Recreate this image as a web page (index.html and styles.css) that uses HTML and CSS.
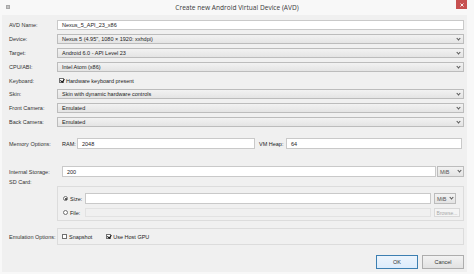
FILE: index.html
```html
<!DOCTYPE html>
<html lang="en">
<head>
    <meta charset="UTF-8">
    <title>Create new Android Virtual Device (AVD)</title>
    <link rel="stylesheet" href="styles.css">
</head>
<body>
    <div class="window">
        <div class="titlebar">
            <span class="app-icon"></span>
            <span class="title">Create new Android Virtual Device (AVD)</span>
            <span class="close">
                <svg width="4" height="4" viewBox="0 0 4 4"><path d="M0.5 0.5 L3.5 3.5 M3.5 0.5 L0.5 3.5" stroke="#fff" stroke-width="0.9"/></svg>
            </span>
        </div>

        <div class="client">
            <div class="form">
                <div class="row">
                    <div class="label">AVD Name:</div>
                    <div class="field">Nexus_5_API_23_x86</div>
                </div>
                <div class="row">
                    <div class="label">Device:</div>
                    <div class="select"><span>Nexus 5 (4.95", 1080 × 1920: xxhdpi)</span><span class="chev"></span></div>
                </div>
                <div class="row">
                    <div class="label">Target:</div>
                    <div class="select"><span>Android 6.0 - API Level 23</span><span class="chev"></span></div>
                </div>
                <div class="row">
                    <div class="label">CPU/ABI:</div>
                    <div class="select"><span>Intel Atom (x86)</span><span class="chev"></span></div>
                </div>
                <div class="row short">
                    <div class="label">Keyboard:</div>
                    <div class="check-item first"><span class="checkbox checked"></span>Hardware keyboard present</div>
                </div>
                <div class="row">
                    <div class="label">Skin:</div>
                    <div class="select"><span>Skin with dynamic hardware controls</span><span class="chev"></span></div>
                </div>
                <div class="row">
                    <div class="label">Front Camera:</div>
                    <div class="select"><span>Emulated</span><span class="chev"></span></div>
                </div>
                <div class="row">
                    <div class="label">Back Camera:</div>
                    <div class="select"><span>Emulated</span><span class="chev"></span></div>
                </div>

                <div class="row tall memory">
                    <div class="label">Memory Options:</div>
                    <div class="composite">
                        <span class="inline-label ram">RAM:</span>
                        <div class="field ram-field">2048</div>
                        <span class="inline-label heap">VM Heap:</span>
                        <div class="field">64</div>
                    </div>
                </div>

                <div class="row tall storage">
                    <div class="label">Internal Storage:</div>
                    <div class="composite">
                        <div class="field">200</div>
                        <div class="select unit wide"><span>MiB</span><span class="chev"></span></div>
                    </div>
                </div>

                <div class="row sd">
                    <div class="label">SD Card:</div>
                    <div class="group sd-group">
                        <div class="sd-line">
                            <div class="option"><span class="radio selected"></span>Size:</div>
                            <div class="field">&nbsp;</div>
                            <div class="side"><div class="select unit"><span>MiB</span><span class="chev"></span></div></div>
                        </div>
                        <div class="sd-line file">
                            <div class="option"><span class="radio"></span>File:</div>
                            <div class="field disabled">&nbsp;</div>
                            <div class="side"><div class="button small disabled">Browse...</div></div>
                        </div>
                    </div>
                </div>

                <div class="row emulation">
                    <div class="label">Emulation Options:</div>
                    <div class="group emu-group">
                        <div class="check-item"><span class="checkbox"></span>Snapshot</div>
                        <div class="check-item gpu"><span class="checkbox checked"></span>Use Host GPU</div>
                    </div>
                </div>
            </div>

            <div class="actions">
                <div class="button default">OK</div>
                <div class="button">Cancel</div>
            </div>
        </div>
    </div>
</body>
</html>
```

FILE: styles.css
```css
* {
    box-sizing: border-box;
}
body {
    margin: 0;
    background-color: #ffffff;
    font-family: "Liberation Sans", Arial, sans-serif;
    font-size: 5.5px;
    color: #222;
}
.window {
    width: 474px;
    height: 274px;
    background-color: #f8f8f8;
    display: flex;
    flex-direction: column;
}

/* title bar */
.titlebar {
    height: 15px;
    display: grid;
    grid-template-columns: 1fr auto 1fr;
    align-items: start;
}
.app-icon {
    width: 4px;
    height: 4px;
    margin: 5px 0 0 6px;
    background-color: #c4c4c4;
    border: 1px solid #a8a8a8;
}
.title {
    font-family: "Open Sans", "Liberation Sans", sans-serif;
    font-size: 6.6px;
    color: #3a3a3a;
    margin-top: 3px;
}
.close {
    justify-self: end;
    width: 11px;
    height: 9px;
    margin-right: 7px;
    background-color: #c75050;
    display: flex;
    justify-content: center;
    align-items: center;
}
.close svg {
    display: block;
}

/* client area */
.client {
    flex: 1;
    margin: 0 7px 2px 2px;
    background-color: #f0f0f0;
    padding: 5px 3px 0 7px;
}
.row {
    display: flex;
    align-items: center;
    height: 10px;
    margin-top: 4px;
}
.row:first-child {
    margin-top: 0;
}
.row.short {
    height: 9px;
}
.row.tall {
    height: 11px;
}
.row.memory {
    margin-top: 11px;
}
.row.storage {
    margin-top: 17px;
}
.label {
    width: 48px;
    flex: none;
    color: #333;
}

.field {
    flex: 1;
    height: 100%;
    background-color: #fff;
    border: 1px solid #c9c9c9;
    padding-left: 4px;
    display: flex;
    align-items: center;
    white-space: nowrap;
}
.field.disabled {
    background-color: #f0f0f0;
    border-color: #e2e2e2;
}
.select {
    flex: 1;
    height: 100%;
    background: linear-gradient(#f2f2f2, #e4e4e4);
    border: 1px solid #bcbcbc;
    padding: 0 3px 0 4px;
    display: flex;
    justify-content: space-between;
    align-items: center;
    white-space: nowrap;
}
.chev {
    width: 3px;
    height: 3px;
    border-right: 1px solid #555;
    border-bottom: 1px solid #555;
    transform: translateY(-1px) rotate(45deg);
}
.select.unit {
    flex: none;
    width: 22px;
    color: #555;
    padding: 0 2px 0 2px;
}
.select.unit.wide {
    width: 27px;
    margin-left: 1px;
}

/* checkboxes & radios */
.check-item {
    display: flex;
    align-items: center;
    white-space: nowrap;
}
.check-item.first {
    margin-left: 2px;
}
.checkbox {
    width: 5px;
    height: 5px;
    border: 1px solid #707070;
    background-color: #fff;
    margin-right: 2px;
    position: relative;
}
.checkbox.checked::after {
    content: "";
    position: absolute;
    left: 1px;
    top: -1px;
    width: 1.5px;
    height: 3px;
    border-right: 1px solid #111;
    border-bottom: 1px solid #111;
    transform: rotate(40deg);
}
.radio {
    width: 5px;
    height: 5px;
    border-radius: 50%;
    border: 1px solid #707070;
    background-color: #fff;
    margin-right: 2px;
    display: flex;
    justify-content: center;
    align-items: center;
}
.radio.selected::after {
    content: "";
    width: 2px;
    height: 2px;
    border-radius: 50%;
    background-color: #222;
}

/* composites */
.composite {
    flex: 1;
    height: 100%;
    display: flex;
    align-items: center;
    padding-left: 5px;
}
.memory .composite {
    padding-right: 2px;
}
.inline-label {
    flex: none;
    white-space: nowrap;
}
.inline-label.ram {
    width: 15px;
}
.inline-label.heap {
    width: 27px;
    margin-left: 4px;
}
.field.ram-field {
    flex: none;
    width: 178px;
}

/* groups */
.row.sd {
    height: auto;
    align-items: flex-start;
    margin-top: 1px;
}
.row.sd .label {
    line-height: 8px;
}
.group {
    flex: 1;
    border: 1px solid #dcdcdc;
}
.sd-group {
    margin-top: 8px;
    padding: 6px 3px 3px 5px;
}
.sd-line {
    display: flex;
    align-items: center;
    height: 11px;
}
.sd-line.file {
    height: 9px;
    margin-top: 4px;
}
.option {
    width: 22px;
    flex: none;
    display: flex;
    align-items: center;
}
.side {
    width: 26px;
    margin-left: 3px;
    height: 100%;
    flex: none;
    display: flex;
}
.row.emulation {
    height: 17px;
    margin-top: 7px;
}
.emu-group {
    height: 100%;
    display: flex;
    align-items: center;
    padding-left: 4px;
}
.check-item.gpu {
    margin-left: 14px;
}

/* buttons */
.button {
    width: 42px;
    height: 14px;
    border: 1px solid #adadad;
    background: linear-gradient(#f2f2f2, #e2e2e2);
    display: flex;
    justify-content: center;
    align-items: center;
    color: #333;
}
.button.default {
    border-color: #3c7fb1;
    background: linear-gradient(#ecf4fc, #dcecfc);
}
.button.small {
    width: 100%;
    height: 100%;
    font-size: 5px;
}
.button.disabled {
    color: #a8a8a8;
    border-color: #d9d9d9;
    background: #f4f4f4;
}
.actions {
    display: flex;
    justify-content: flex-end;
    gap: 4px;
    margin-top: 10px;
}
```
